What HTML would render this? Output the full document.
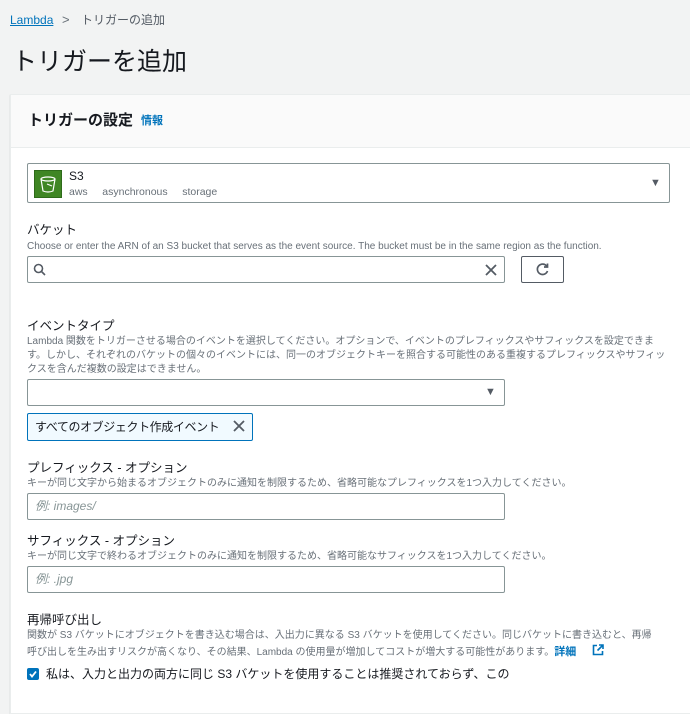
<!DOCTYPE html><html><head><meta charset="utf-8"><style>
*{box-sizing:border-box;margin:0;padding:0}
body{width:690px;height:685px;overflow:hidden;background:#f2f3f3;font-family:"Liberation Sans","Noto Sans CJK JP",sans-serif;color:#16191f;position:relative}
.a{position:absolute;white-space:nowrap;line-height:1.2}
.t{padding-top:2px}
.lbl{font-size:12.5px;color:#16191f}
.desc{font-size:10px;color:#687078}
.inp{position:absolute;background:#fff;border:1px solid #879596;border-radius:2px}
.ph{font-size:12px;color:#879596;font-style:italic}
</style></head><body>
<div class="a" style="left:10px;top:13px;font-size:12px;color:#0073bb;text-decoration:underline">Lambda</div>
<div class="a" style="left:62px;top:12px;font-size:13px;color:#687078">&gt;</div>
<div class="a" style="left:81px;top:13px;font-size:12px;color:#545b64">トリガーの追加</div>
<div class="a" style="left:12px;top:47px;font-size:25px;color:#16191f">トリガーを追加</div>
<div style="position:absolute;left:10px;top:94px;width:700px;height:620px;background:#fff;border:1px solid #eaeded;box-shadow:0 1px 1px rgba(0,28,36,.2)"></div>
<div style="position:absolute;left:11px;top:95px;width:700px;height:53px;background:#fafafa;border-bottom:1px solid #eaeded"></div>
<div class="a" style="left:28px;top:112px;font-size:15px;font-weight:bold">トリガーの設定</div>
<div class="a" style="left:141px;top:115px;font-size:11px;color:#0073bb;font-weight:bold">情報</div>
<div class="inp" style="left:27px;top:163px;width:643px;height:40px"></div>
<div class="a" style="left:34px;top:170px;width:28px;height:28px;background:#3f8624;border:1px solid #2e6b1a"></div>
<svg class="a" style="left:38px;top:174px" width="20" height="20" viewBox="0 0 20 20" fill="none" stroke="#fff" stroke-width="1.2"><ellipse cx="10" cy="5" rx="7" ry="2"/><path d="M3 5 L5 17 Q10 19 15 17 L17 5"/><path d="M9 10 L14 12"/></svg>
<div class="a" style="left:69px;top:169px;font-size:12px">S3</div>
<div class="a" style="left:69px;top:186px;font-size:10.5px;color:#687078">aws&nbsp;&nbsp;&nbsp;&nbsp;&nbsp;asynchronous&nbsp;&nbsp;&nbsp;&nbsp;&nbsp;storage</div>
<div class="a" style="left:650px;top:177px;font-size:11px;color:#545b64">▼</div>
<div class="a lbl t" style="left:27px;top:221px">バケット</div>
<div class="a desc t" style="left:27px;top:239px">Choose or enter the ARN of an S3 bucket that serves as the event source. The bucket must be in the same region as the function.</div>
<div class="inp" style="left:27px;top:256px;width:478px;height:27px"></div>
<svg class="a" style="left:33px;top:263px" width="13" height="13" viewBox="0 0 13 13" fill="none" stroke="#545b64" stroke-width="1.6"><circle cx="5.5" cy="5.5" r="4"/><path d="M8.5 8.5L12 12"/></svg>
<svg class="a" style="left:485px;top:264px" width="12" height="12" viewBox="0 0 12 12" stroke="#545b64" stroke-width="1.8"><path d="M1 1L11 11M11 1L1 11"/></svg>
<div class="inp" style="left:521px;top:256px;width:43px;height:27px;border-color:#545b64"></div>
<svg class="a" style="left:535px;top:262px" width="15" height="15" viewBox="0 0 15 15" fill="none" stroke="#545b64" stroke-width="1.7"><path d="M12 4.5A5.2 5.2 0 1 0 12.5 9"/><path d="M12.5 1.5V5H9" /></svg>
<div class="a lbl t" style="left:27px;top:317px">イベントタイプ</div>
<div class="a desc t" style="left:27px;top:333px;white-space:normal;width:640px;line-height:14px">Lambda 関数をトリガーさせる場合のイベントを選択してください。オプションで、イベントのプレフィックスやサフィックスを設定できます。しかし、それぞれのバケットの個々のイベントには、同一のオブジェクトキーを照合する可能性のある重複するプレフィックスやサフィックスを含んだ複数の設定はできません。</div>
<div class="inp" style="left:27px;top:379px;width:478px;height:27px"></div>
<div class="a" style="left:485px;top:386px;font-size:11px;color:#545b64">▼</div>
<div class="a" style="left:27px;top:413px;width:226px;height:28px;background:#f1faff;border:1px solid #0073bb;border-radius:2px"></div>
<div class="a t" style="left:35px;top:418px;font-size:12px;letter-spacing:-0.4px">すべてのオブジェクト作成イベント</div>
<svg class="a" style="left:233px;top:420px" width="12" height="12" viewBox="0 0 12 12" stroke="#545b64" stroke-width="1.8"><path d="M1 1L11 11M11 1L1 11"/></svg>
<div class="a lbl t" style="left:27px;top:459px">プレフィックス - オプション</div>
<div class="a desc t" style="left:27px;top:476px">キーが同じ文字から始まるオブジェクトのみに通知を制限するため、省略可能なプレフィックスを1つ入力してください。</div>
<div class="inp" style="left:27px;top:493px;width:478px;height:27px"></div>
<div class="a ph" style="left:35px;top:499px">例: images/</div>
<div class="a lbl t" style="left:27px;top:532px">サフィックス - オプション</div>
<div class="a desc t" style="left:27px;top:549px">キーが同じ文字で終わるオブジェクトのみに通知を制限するため、省略可能なサフィックスを1つ入力してください。</div>
<div class="inp" style="left:27px;top:566px;width:478px;height:27px"></div>
<div class="a ph" style="left:35px;top:572px">例: .jpg</div>
<div class="a lbl t" style="left:27px;top:611px">再帰呼び出し</div>
<div class="a desc t" style="left:27px;top:628px">関数が S3 バケットにオブジェクトを書き込む場合は、入出力に異なる S3 バケットを使用してください。同じバケットに書き込むと、再帰</div>
<div class="a desc t" style="left:27px;top:644px">呼び出しを生み出すリスクが高くなり、その結果、Lambda の使用量が増加してコストが増大する可能性があります。<span style="color:#0073bb;font-size:11px;font-weight:bold">詳細</span></div>
<svg class="a" style="left:592px;top:644px" width="12" height="12" viewBox="0 0 12 12" fill="none" stroke="#0073bb" stroke-width="1.6"><path d="M5 1.5H1.5V10.5H10.5V7M7 1H11V5M11 1L5.5 6.5"/></svg>
<div class="a" style="left:27px;top:668px;width:12px;height:12px;background:#0073bb;border-radius:2px"></div>
<svg class="a" style="left:28px;top:669px" width="10" height="10" viewBox="0 0 10 10" fill="none" stroke="#fff" stroke-width="1.8"><path d="M2 5L4 7.5L8 2.5"/></svg>
<div class="a t" style="left:46px;top:665px;font-size:12px">私は、入力と出力の両方に同じ S3 バケットを使用することは推奨されておらず、この</div>
</body></html>
